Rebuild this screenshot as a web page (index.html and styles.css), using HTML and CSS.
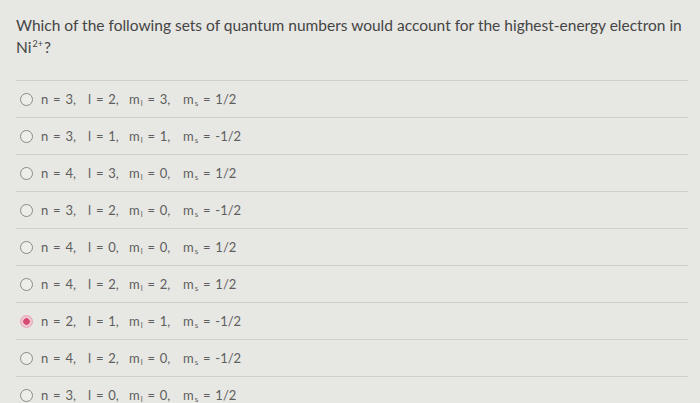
FILE: index.html
```html
<!DOCTYPE html>
<html>
<head>
<meta charset="utf-8">
<link rel="stylesheet" href="styles.css">
</head>
<body>
<div class="page">
  <p class="question">Which of the following sets of quantum numbers would account for the highest-energy electron in Ni<sup>2+</sup>?</p>
  <ul class="options">
    <li class="option"><span class="radio"></span><span class="q q1">n = 3,</span><span class="q q2">l = 2,</span><span class="q q3">m<sub>l</sub> = 3,</span><span class="q">m<sub>s</sub> = 1/2</span></li>
    <li class="option"><span class="radio"></span><span class="q q1">n = 3,</span><span class="q q2">l = 1,</span><span class="q q3">m<sub>l</sub> = 1,</span><span class="q">m<sub>s</sub> = -1/2</span></li>
    <li class="option"><span class="radio"></span><span class="q q1">n = 4,</span><span class="q q2">l = 3,</span><span class="q q3">m<sub>l</sub> = 0,</span><span class="q">m<sub>s</sub> = 1/2</span></li>
    <li class="option"><span class="radio"></span><span class="q q1">n = 3,</span><span class="q q2">l = 2,</span><span class="q q3">m<sub>l</sub> = 0,</span><span class="q">m<sub>s</sub> = -1/2</span></li>
    <li class="option"><span class="radio"></span><span class="q q1">n = 4,</span><span class="q q2">l = 0,</span><span class="q q3">m<sub>l</sub> = 0,</span><span class="q">m<sub>s</sub> = 1/2</span></li>
    <li class="option"><span class="radio"></span><span class="q q1">n = 4,</span><span class="q q2">l = 2,</span><span class="q q3">m<sub>l</sub> = 2,</span><span class="q">m<sub>s</sub> = 1/2</span></li>
    <li class="option"><span class="radio checked"></span><span class="q q1">n = 2,</span><span class="q q2">l = 1,</span><span class="q q3">m<sub>l</sub> = 1,</span><span class="q">m<sub>s</sub> = -1/2</span></li>
    <li class="option"><span class="radio"></span><span class="q q1">n = 4,</span><span class="q q2">l = 2,</span><span class="q q3">m<sub>l</sub> = 0,</span><span class="q">m<sub>s</sub> = -1/2</span></li>
    <li class="option"><span class="radio"></span><span class="q q1">n = 3,</span><span class="q q2">l = 0,</span><span class="q q3">m<sub>l</sub> = 0,</span><span class="q">m<sub>s</sub> = 1/2</span></li>
  </ul>
</div>
</body>
</html>
```
FILE: styles.css
```css
html, body {
  margin: 0;
  padding: 0;
  height: 100%;
  overflow: hidden;
}
body {
  background: #e7e7e3;
  font-family: Lato, "Open Sans", sans-serif;
}
.page {
  padding: 14px 12px 0 16px;
}
.question {
  margin: 0;
  font-size: 15.5px;
  line-height: 22px;
  color: #454545;
}
.question sup {
  display: inline-block;
  font-size: 9px;
  line-height: 9px;
  vertical-align: 6px;
  margin: 0 1px;
}
.options {
  list-style: none;
  margin: 22px 0 0 0;
  padding: 0;
}
.option {
  height: 37px;
  box-sizing: border-box;
  border-top: 1px solid #cfcfcb;
  display: flex;
  align-items: center;
  font-size: 13px;
  color: #5e5e5e;
  padding-left: 4px;
}
.radio {
  width: 11px;
  height: 11px;
  border: 1px solid #8a8a8a;
  border-radius: 50%;
  background: #ededea;
  margin-right: 8px;
  flex: none;
  box-sizing: content-box;
}
.radio.checked {
  border-color: #e8a3b6;
  background: radial-gradient(circle, #d64d74 0, #d64d74 3px, #f0c4d0 3.6px, #f0c4d0 100%);
}
.q {
  white-space: nowrap;
  word-spacing: 1.5px;
}
.q1 { width: 47px; }
.q2 { width: 41px; }
.q3 { width: 54px; }
.q sub {
  font-size: 8px;
  line-height: 0;
  vertical-align: -2px;
  margin-left: 1px;
}
```
